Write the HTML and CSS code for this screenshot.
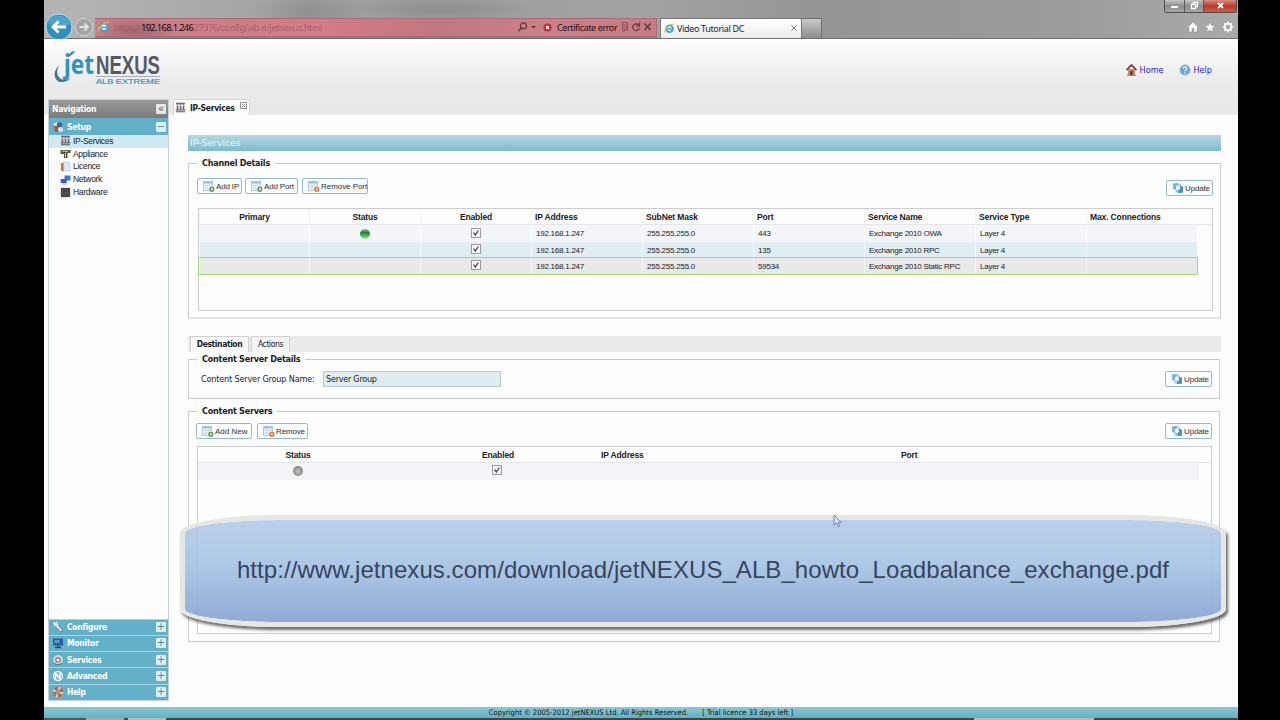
FILE: index.html
```html
<!DOCTYPE html>
<html lang="en">
<head>
  <meta charset="UTF-8" />
  <title>Video Tutorial DC</title>
  <link rel="stylesheet" href="styles.css">
</head>
<body>
  <!-- shared icons -->
  <svg class="defs" width="0" height="0">
    <symbol id="ie" viewBox="0 0 12 12">
      <circle cx="6" cy="6.3" r="3.7" fill="#d9f0fb" stroke="#3d9fd6" stroke-width="2"/>
      <path d="M3 6.5h6.5" stroke="#3d9fd6" stroke-width="1.4"/>
      <path d="M1 10.5C-.5 7 7 .2 11 1.6" fill="none" stroke="#e3bd3c" stroke-width="1.2"/>
    </symbol>
    <symbol id="servers" viewBox="0 0 11 11">
      <path d="M1 1.2h9M1 9.7h9M.5 8h10" stroke="#555" stroke-width="1.1"/>
      <path d="M2.5 1v7M5.5 1v7M8.5 1v7" stroke="#666" stroke-width="1.6"/>
      <path d="M2.5 3v1M5.5 3v1M8.5 3v1" stroke="#ddd" stroke-width="1"/>
    </symbol>
    <symbol id="grid-add" viewBox="0 0 12 12">
      <rect x=".5" y="1.500" width="9" height="9" fill="#edf4fa" stroke="#b4c8da"/>
      <path d="M1 2.500h8.500" stroke="#9cc2e4" stroke-width="2"/>
      <path d="M1 5.500h9M1 8h9M4 3v8M7 3v8" stroke="#c4d3e1" stroke-width=".7"/>
      <circle cx="8.800" cy="9.300" r="1.900" fill="#dff0d8" stroke="#4b9a3e" stroke-width="1.400"/>
    </symbol>
    <symbol id="grid-del" viewBox="0 0 12 12">
      <rect x=".5" y="1.500" width="9" height="9" fill="#edf4fa" stroke="#b4c8da"/>
      <path d="M1 2.500h8.500" stroke="#9cc2e4" stroke-width="2"/>
      <path d="M1 5.500h9M1 8h9M4 3v8M7 3v8" stroke="#c4d3e1" stroke-width=".7"/>
      <circle cx="8.800" cy="9.300" r="1.900" fill="#f6d3bd" stroke="#e2702e" stroke-width="1.400"/>
    </symbol>
    <symbol id="refresh" viewBox="0 0 12 12">
      <path d="M1 1.500 6 .8v2.400L4 4.500v3.700L1 7z" fill="#79b4df"/>
      <path d="M11 10.800 5.700 11V8.300L8 7.200V3.500l3 1.300z" fill="#4a8fca"/>
      <path d="M5 2 9 1.600 7.500 5zM7 10 3 10.400 4.800 6.800z" fill="#9bcbea"/>
    </symbol>
    <symbol id="check" viewBox="0 0 10 10">
      <rect x=".5" y=".5" width="9" height="9" fill="#f4f4f4" stroke="#9b9d9f"/>
      <path d="M2.600 4.600 4.300 7 7.400 2.500" fill="none" stroke="#444b55" stroke-width="1.300"/>
    </symbol>
  </svg>

  <div class="window">
    <div class="chrome">
      <svg class="nav-buttons" width="51" height="28" viewBox="0 0 51 28">
        <circle cx="15" cy="14" r="13" fill="#2f8fbe" stroke="#b9dcea"/>
        <path d="M3.500 11a12 12 0 0 1 23 0q-11 5-23 0" fill="#66b3d4" opacity=".6"/>
        <path d="M22 14H9.500M14.500 8.500 9 14l5.500 5.500" fill="none" stroke="#fff" stroke-width="2.800"/>
        <circle cx="40" cy="14" r="8.700" fill="#a3a3a3" stroke="#c8c8c8" stroke-width="1.200"/>
        <path d="M35.500 14h8M40.500 10.500 44 14l-3.500 3.500" fill="none" stroke="#e2e2e2" stroke-width="1.800"/>
      </svg>
      <div class="address">
        <svg width="12" height="12"><use href="#ie"/></svg>
        <span class="scheme">https://</span><span class="host">192.168.1.246</span><span class="path">:27376/config/alb-e/jetnexus.html</span>
        <svg class="search" width="20" height="12" viewBox="0 0 20 12">
          <circle cx="6.500" cy="4.800" r="3" fill="none" stroke="#5a3a40" stroke-width="1.200"/>
          <path d="M4.300 7 1.500 10" stroke="#5a3a40" stroke-width="1.600"/>
          <path d="M14 5h5l-2.500 2.500z" fill="#5a3a40"/>
        </svg>
        <svg class="cert-icon" width="9" height="9" viewBox="0 0 9 9">
          <circle cx="4.500" cy="4.500" r="4" fill="#d3202c"/>
          <path d="M3 3l3 3M6 3 3 6" stroke="#fff" stroke-width="1.200"/>
        </svg>
        <span class="cert">Certificate error</span>
        <svg class="addr-tools" width="31" height="10" viewBox="0 0 31 10">
          <path d="M1.500.5h5v8h-5zM2 3h4M2 5h4M2 7h4" fill="none" stroke="#8d565e"/>
          <path d="M17.500 3A3.300 3.300 0 1 0 18.300 6M18.500.5V4H15" fill="none" stroke="#543a3e" stroke-width="1.200"/>
          <path d="M23.500 1.500l6 6.500M29.500 1.500l-6 6.500" stroke="#543a3e" stroke-width="1.400"/>
        </svg>
      </div>
      <div class="tab">
        <svg width="11" height="11"><use href="#ie"/></svg>
        <span>Video Tutorial DC</span>
        <svg class="tab-close" width="6" height="6" viewBox="0 0 6 6"><path d="M.5.5l5 5M5.500.5l-5 5" stroke="#777"/></svg>
      </div>
      <div class="new-tab"></div>
      <div class="window-side">
        <div class="window-buttons">
          <div class="wb"><svg width="19" height="12" viewBox="0 0 19 12"><path d="M6 7h7" stroke="#fff" stroke-width="2"/></svg></div>
          <div class="wb"><svg width="18" height="12" viewBox="0 0 18 12"><path d="M6.500 4.500h4v4h-4zM8.500 4V2.500h4v4H11" fill="none" stroke="#fff" stroke-width="1.300"/></svg></div>
          <div class="wb wb-close"><svg width="32" height="12" viewBox="0 0 32 12"><path d="M14 3l5 5M19 3l-5 5" stroke="#fff" stroke-width="1.800"/></svg></div>
        </div>
        <svg class="tools" width="48" height="12" viewBox="0 0 48 12" fill="#fff" stroke="#777" stroke-width=".4">
          <path d="M6 1 11 6 10 7 10 11H7V7.500H5V11H2V7L1 6z"/>
          <path d="M23 .8l1.500 3.600 3.900.3-3 2.500.9 3.900L23 9l-3.300 2.100.9-3.900-3-2.500 3.900-.3z"/>
          <circle cx="41" cy="6" r="3.300" fill="none" stroke="#fff" stroke-width="1.800"/>
          <path d="M41 .8v1.500M41 9.700v1.500M35.800 6h1.500M44.700 6h1.500M37.300 2.300l1 1M43.700 8.700l1 1M44.700 2.300l-1 1M38.300 8.700l-1 1" stroke="#fff" stroke-width="1.600"/>
        </svg>
      </div>
    </div>

    <div class="page">
      <div class="header">
        <svg class="logo" width="112" height="38" viewBox="0 0 112 38">
          <path d="M5.500 16C-.5 21-1 29 4.500 32.500c4 1.500 9 0 12-3-4 1.500-8 2-10.500-.3C2 26 2.500 20 5.500 16z" fill="#3b7791"/>
          <path d="M13 9l6-4 2-3-3 .5-3 3z" fill="#2389b5"/>
          <text class="logo-jet" x="10" y="25" textLength="30" lengthAdjust="spacingAndGlyphs">jet</text>
          <text class="logo-nexus" x="42" y="25" textLength="64" lengthAdjust="spacingAndGlyphs">NEXUS</text>
          <path d="M42 27.500h64" stroke="#8a96a3" stroke-width=".7"/>
          <text class="logo-alb" x="42" y="34.500" textLength="64" lengthAdjust="spacingAndGlyphs">ALB EXTREME</text>
        </svg>
        <div class="links">
          <a href="#">
            <svg width="11" height="12" viewBox="0 0 11 12"><path d="M2 5h7v6H2z" fill="#c98a66"/><path d="M.5 6 5.500 1l5 5" fill="none" stroke="#8e3f2c" stroke-width="1.800"/><path d="M4.300 7h2.400v4H4.300z" fill="#5e2c22"/><path d="M1 11.300h9" stroke="#777"/></svg>
            <span>Home</span>
          </a>
          <a href="#">
            <svg width="12" height="12" viewBox="0 0 12 12"><circle cx="6" cy="6" r="5.200" fill="#6ba5cf" stroke="#a8c3d6"/><path d="M4.300 4.600c0-2.300 3.600-2.100 3.500 0C7.700 6 6 5.800 6 7.300M6 8.500v1.200" fill="none" stroke="#fff" stroke-width="1.200"/></svg>
            <span>Help</span>
          </a>
        </div>
      </div>

      <div class="body">
        <div class="sidebar">
          <div class="nav-title"><span>Navigation</span><span class="toggle">«</span></div>
          <div class="nav-group">
            <svg width="12" height="12" viewBox="0 0 12 12"><path d="M1 3l4-2 2 3-3 2z" fill="#e7dfc4"/><circle cx="7.500" cy="4" r="2.700" fill="#3567a8"/><path d="M2 5h4l1 6H3z" fill="#b5523a"/><circle cx="8.500" cy="8.500" r="2.500" fill="#d8e1ea"/></svg>
            <span>Setup</span><span class="toggle">−</span>
          </div>
          <ul class="nav-items">
            <li class="active"><svg width="11" height="11"><use href="#servers"/></svg>IP-Services</li>
            <li><svg width="11" height="11" viewBox="0 0 11 11"><path d="M.5 2h10v3H7.500v5H4V6H.5z" fill="#5a5a38"/><path d="M2 3.300h6M5.500 5v4" stroke="#d8d25a"/></svg>Appliance</li>
            <li><svg width="11" height="11" viewBox="0 0 11 11"><path d="M3 1h6l1 1v8H3z" fill="#dbe8f4" stroke="#b2c5d8" stroke-width=".6"/><path d="M1 2h2.500v8H1z" fill="#e0683c"/></svg>Licence</li>
            <li><svg width="11" height="11" viewBox="0 0 11 11"><path d="M4.500 1.500h6v5h-6z" fill="#3f78c6"/><path d="M.8 5h6v4h-6z" fill="#2f62b2"/><path d="M1.500 10h5" stroke="#9ab"/></svg>Network</li>
            <li><svg width="11" height="11" viewBox="0 0 11 11"><path d="M1 1h9v9H1z" fill="#3d3d3d"/><path d="M.5 3h10M.5 5.500h10M.5 8h10M3 .5v10M5.500.5v10M8 .5v10" stroke="#555" stroke-width=".8"/></svg>Hardware</li>
          </ul>
          <div class="nav-bottom">
            <div class="nav-group"><svg width="12" height="12" viewBox="0 0 12 12"><path d="M3.500 3.500 10 10.500" stroke="#555f66" stroke-width="3"/><path d="M1.500 1.500 4 4l5.500 6" stroke="#eee" stroke-width="2"/><path d="M4.500.8 5.500 4 2 5" fill="none" stroke="#eee" stroke-width="1.200"/></svg><span>Configure</span><span class="toggle">+</span></div>
            <div class="nav-group"><svg width="12" height="12" viewBox="0 0 12 12"><path d="M1 1.500h10v7H1z" fill="#2b5f9e"/><path d="M2.500 3h5v3h-5z" fill="#5c9ad0"/><path d="M3 10.500h6M6 8v2" stroke="#345" stroke-width="1.300"/></svg><span>Monitor</span><span class="toggle">+</span></div>
            <div class="nav-group"><svg width="12" height="12" viewBox="0 0 12 12"><circle cx="6" cy="6" r="3.800" fill="#777" stroke="#d4d4d4" stroke-width="2.200"/><circle cx="6" cy="6" r="1.600" fill="#eee"/><path d="M2 9.500q4 2.500 8 0" fill="none" stroke="#666"/></svg><span>Services</span><span class="toggle">+</span></div>
            <div class="nav-group"><svg width="12" height="12" viewBox="0 0 12 12"><circle cx="6" cy="6" r="4.500" fill="#8dabc4" stroke="#e4edf2" stroke-width="1.300"/><path d="M3.500 9V3.500L8 8.500V3" fill="none" stroke="#fff" stroke-width="1.500"/></svg><span>Advanced</span><span class="toggle">+</span></div>
            <div class="nav-group"><svg width="12" height="12" viewBox="0 0 12 12"><circle cx="6" cy="6" r="3.700" fill="none" stroke="#d0602e" stroke-width="3"/><circle cx="6" cy="6" r="3.700" fill="none" stroke="#e8dccb" stroke-width="3" stroke-dasharray="1.800 4.012"/></svg><span>Help</span><span class="toggle">+</span></div>
          </div>
        </div>

        <div class="main">
          <div class="page-tabs">
            <div class="page-tab">
              <svg width="11" height="11"><use href="#servers"/></svg>
              <span>IP-Services</span>
              <svg class="page-tab-close" width="7" height="7" viewBox="0 0 7 7"><path d="M.5.5h6v6h-6zM2 2l3 3M5 2 2 5" fill="none" stroke="#888" stroke-width=".9"/></svg>
            </div>
          </div>

          <div class="content">
            <div class="panel-title">IP-Services</div>

            <fieldset class="channels">
              <legend>Channel Details</legend>
              <div class="toolbar">
                <button class="btn add-ip"><svg width="12" height="12"><use href="#grid-add"/></svg>Add IP</button>
                <button class="btn add-port"><svg width="12" height="12"><use href="#grid-add"/></svg>Add Port</button>
                <button class="btn remove-port"><svg width="12" height="12"><use href="#grid-del"/></svg>Remove Port</button>
                <button class="btn update"><svg width="12" height="12"><use href="#refresh"/></svg>Update</button>
              </div>
              <div class="grid channel-grid">
                <div class="row head">
                  <div class="mid">Primary</div><div class="mid">Status</div><div class="mid">Enabled</div>
                  <div>IP Address</div><div>SubNet Mask</div><div>Port</div><div>Service Name</div><div>Service Type</div><div>Max. Connections</div>
                </div>
                <div class="row first">
                  <div></div><div class="mid"><span class="led green"></span></div><div class="mid box"><svg width="10" height="10"><use href="#check"/></svg></div>
                  <div>192.168.1.247</div><div>255.255.255.0</div><div>443</div><div>Exchange 2010 OWA</div><div>Layer 4</div><div></div>
                </div>
                <div class="row alt">
                  <div></div><div></div><div class="mid box"><svg width="10" height="10"><use href="#check"/></svg></div>
                  <div>192.168.1.247</div><div>255.255.255.0</div><div>135</div><div>Exchange 2010 RPC</div><div>Layer 4</div><div></div>
                </div>
                <div class="row selected">
                  <div></div><div></div><div class="mid box"><svg width="10" height="10"><use href="#check"/></svg></div>
                  <div>192.168.1.247</div><div>255.255.255.0</div><div>59534</div><div>Exchange 2010 Static RPC</div><div>Layer 4</div><div></div>
                </div>
              </div>
            </fieldset>

            <div class="sub-tabs">
              <div class="sub-tab current">Destination</div>
              <div class="sub-tab">Actions</div>
            </div>

            <fieldset class="group">
              <legend>Content Server Details</legend>
              <div class="field-row">
                <label>Content Server Group Name:</label>
                <div class="field">Server Group</div>
                <button class="btn update"><svg width="12" height="12"><use href="#refresh"/></svg>Update</button>
              </div>
            </fieldset>

            <fieldset class="servers">
              <legend>Content Servers</legend>
              <div class="toolbar">
                <button class="btn add-new"><svg width="12" height="12"><use href="#grid-add"/></svg>Add New</button>
                <button class="btn remove"><svg width="12" height="12"><use href="#grid-del"/></svg>Remove</button>
                <button class="btn update"><svg width="12" height="12"><use href="#refresh"/></svg>Update</button>
              </div>
              <div class="grid server-grid">
                <div class="row head"><div class="mid">Status</div><div class="mid">Enabled</div><div>IP Address</div><div>Port</div></div>
                <div class="row first"><div class="mid"><span class="led grey"></span></div><div class="mid box"><svg width="10" height="10"><use href="#check"/></svg></div><div></div><div></div></div>
              </div>
            </fieldset>
          </div>
        </div>
      </div>
    </div>

    <div class="footer"><span>Copyright © 2005-2012 jetNEXUS Ltd. All Rights Reserved.</span><span>[ Trial licence 33 days left ]</span></div>
    <div class="taskbar"></div>

    <div class="callout"><span>http://www.jetnexus.com/download/jetNEXUS_ALB_howto_Loadbalance_exchange.pdf</span></div>
    <svg class="cursor" width="9" height="14" viewBox="0 0 9 14"><path d="M1 1v10l2.300-2 1.700 3.800 1.700-.8L5 8.300h3z" fill="#d5e2f2" stroke="#66809f" stroke-width=".9"/></svg>
  </div>
</body>
</html>
```
FILE: styles.css
```css
* {
  box-sizing: border-box;
}

body {
  margin: 0;
  height: 720px;
  overflow: hidden;
  background: #000;
  font-family: "Liberation Sans", Arial, sans-serif;
  font-size: 8px;
  color: #222;
}

svg {
  display: block;
  flex: none;
}

.defs {
  position: absolute;
}

.window {
  position: relative;
  width: 1194px;
  height: 720px;
  margin-left: 44px;
  display: flex;
  flex-direction: column;
  background: #fdfdfe;
}

/* browser frame */
.chrome {
  flex: none;
  height: 39px;
  display: flex;
  align-items: flex-end;
  border-bottom: 1px solid #707070;
  background:
    radial-gradient(ellipse 60px 25px at 265px 12px, rgba(110, 110, 110, 0.35), transparent),
    radial-gradient(ellipse 90px 14px at 400px 10px, rgba(120, 120, 120, 0.4), transparent),
    linear-gradient(90deg, #b5b5b5 0, #a8a8a8 15%, #9d9d9d 30%, #a2a2a2 50%, #959595 65%, #9b9b9b 85%, #aaa 100%);
  font-family: "Noto Sans", "Open Sans", sans-serif;
}

.nav-buttons {
  height: 28px;
  margin-bottom: -3px;
}

.address {
  width: 562px;
  height: 20px;
  padding: 0 4px 1px 3px;
  display: flex;
  align-items: center;
  border: 1px solid #a96c74;
  border-width: 1px 1px 2px 0;
  background:
    radial-gradient(ellipse 40px 14px at 40px 12px, rgba(120, 80, 90, 0.55), transparent),
    linear-gradient(90deg, #c97f88, #d57c88 40%, #c37681 60%, #cc808a 80%, #c87b85);
  font-size: 9px;
  color: #a4636d;
  white-space: nowrap;
}

.scheme {
  width: 27px;
  margin-left: 4px;
  letter-spacing: -0.6px;
}

.scheme, .path {
  filter: blur(0.5px);
}

.path {
  letter-spacing: -0.4px;
}

.host {
  width: 50px;
  margin-right: 1px;
  letter-spacing: -0.75px;
  font-size: 9.5px;
  color: #15090b;
}

.search {
  margin-left: auto;
}

.cert-icon {
  margin-left: 6px;
}

.cert {
  width: 60px;
  margin: 0 4px 0 5px;
  font-size: 9px;
  letter-spacing: -0.4px;
  color: #241013;
}

.tab {
  width: 142px;
  height: 20px;
  margin-left: 3px;
  padding: 0 4px 1px 3px;
  display: flex;
  align-items: center;
  gap: 2px;
  border: 1px solid #777;
  border-bottom: 0;
  background: linear-gradient(#fff, #ededed);
  font-size: 9px;
  letter-spacing: -0.35px;
}

.tab-close {
  margin-left: auto;
}

.new-tab {
  width: 20px;
  height: 20px;
  border: 1px solid #6d6d6d;
  border-width: 1px 1px 0 0;
  background: linear-gradient(#c9c9c9, #8d8d8d);
}

.window-side {
  height: 38px;
  margin-left: auto;
  display: flex;
  flex-direction: column;
  align-items: flex-end;
}

.window-buttons {
  display: flex;
  height: 13px;
  margin-right: 1px;
  border: 1px solid #4f4f4f;
  border-top: 0;
  border-radius: 0 0 3px 3px;
  overflow: hidden;
}

.wb {
  border-right: 1px solid #5b5b5b;
  background: linear-gradient(#c5c5c5, #8c8c8c 50%, #a7a7a7);
}

.wb-close {
  border-right: 0;
  background: linear-gradient(#d98f83, #b93a29 50%, #cf5b44);
}

.tools {
  margin: 8px 3px 0 0;
}

/* page */
.page {
  flex: 1;
  min-height: 0;
  display: flex;
  flex-direction: column;
  background: linear-gradient(#fdfdfd, #ebebeb 45px, #e9e9e9 76px, #fdfdfe 76px);
}

.header {
  height: 60px;
  display: flex;
  justify-content: space-between;
}

.logo {
  margin: 10px 0 0 10px;
  overflow: visible;
}

.logo-jet {
  font: bold 27px "Noto Sans", "Open Sans", sans-serif;
  fill: #2c94be;
}

.logo-nexus {
  font: bold 26px "Liberation Sans", sans-serif;
  fill: #555a68;
}

.logo-alb {
  font: 7.5px "Liberation Sans", sans-serif;
  fill: #3b93b4;
  stroke: #3b93b4;
  stroke-width: 0.2px;
}

.links {
  display: flex;
  gap: 15px;
  padding: 24px 26px 0 0;
}

.links a {
  display: flex;
  align-items: center;
  gap: 3px;
  height: 13px;
  font: 9px "DejaVu Sans Condensed", "DejaVu Sans", sans-serif;
  color: #2a22c0;
  text-decoration: none;
}

.body {
  flex: 1;
  display: flex;
  padding-left: 4px;
}

.sidebar {
  width: 121px;
  height: 602px;
  display: flex;
  flex-direction: column;
  border: 1px solid #c3d3da;
  background: #fdfdfe;
}

.nav-title, .nav-group {
  display: flex;
  align-items: center;
  font: bold 8.5px "DejaVu Sans Condensed", "DejaVu Sans", sans-serif;
  letter-spacing: -0.25px;
  color: #fff;
}

.nav-title {
  height: 18px;
  padding: 0 2px 0 3px;
  background: linear-gradient(#9a9a9a, #7b7b7b);
}

.nav-group {
  height: 17px;
  padding: 0 2px 0 3px;
  gap: 3px;
  background: #62b1c8;
}

.toggle {
  width: 10px;
  height: 10px;
  margin-left: auto;
  border-radius: 1px;
  background: #d9eef5;
  font: 10px/9px "DejaVu Sans", sans-serif;
  letter-spacing: 0;
  text-align: center;
  color: #4a8ba1;
}

.nav-title .toggle {
  background: #e6e6e6;
  color: #555;
}

.nav-items {
  margin: 0;
  padding: 0;
  list-style: none;
}

.nav-items li {
  height: 12.8px;
  padding-left: 11px;
  padding-bottom: 1px;
  display: flex;
  align-items: center;
  gap: 2px;
  font-size: 8.5px;
  letter-spacing: -0.3px;
}

.nav-items .active {
  background: #cfe9f2;
}

.nav-bottom {
  margin-top: auto;
}

.nav-bottom .nav-group {
  height: 16.3px;
  border-top: 1px solid #a5d5e2;
}

.main {
  flex: 1;
}

.page-tabs {
  height: 16px;
  padding-left: 4px;
}

.page-tab {
  width: 77px;
  height: 16px;
  padding: 0 2px 0 1px;
  display: flex;
  align-items: center;
  gap: 4px;
  border: 1px solid #d5d5d5;
  border-bottom: 0;
  border-radius: 2px 2px 0 0;
  background: #fdfdfe;
  font: bold 8.5px "DejaVu Sans Condensed", "DejaVu Sans", sans-serif;
  letter-spacing: -0.3px;
  color: #222;
  white-space: nowrap;
}

.page-tab-close {
  margin: -4px 0 0 auto;
}

.content {
  padding: 20px 17px 0 19px;
}

.panel-title {
  height: 16px;
  padding-left: 2px;
  background: linear-gradient(#b4d9e3, #7fb9d0);
  font: 9.5px/16px "DejaVu Sans", sans-serif;
  letter-spacing: -0.1px;
  color: #e9f7fb;
}

fieldset {
  margin: 0;
  padding: 0;
  min-width: 0;
  border: 1px solid #c6c8ca;
}

legend {
  height: 12px;
  margin-left: 8px;
  padding: 0 5px;
  font: bold 9px/12px "DejaVu Sans Condensed", "DejaVu Sans", sans-serif;
  letter-spacing: -0.25px;
  color: #1c1c1c;
}

.channels {
  height: 162px;
  margin-top: 6px;
  border-bottom: 2px solid #e4e4e4;
}

.toolbar {
  display: flex;
  align-items: flex-start;
}

.btn {
  height: 16px;
  margin: 0;
  padding: 0 0 0 5px;
  display: flex;
  align-items: center;
  gap: 1px;
  border: 1px solid #93bccb;
  border-radius: 2px;
  background: #fbfcfd;
  font: 8px "Liberation Sans", Arial, sans-serif;
  letter-spacing: -0.15px;
  color: #333;
  white-space: nowrap;
}

.channels .toolbar {
  height: 39px;
  padding: 9px 7px 0 8px;
}

.channels .update {
  margin-top: 2px;
}

.add-ip { width: 45px; margin-right: 3px; }
.add-port { width: 53px; margin-right: 4px; }
.remove-port { width: 66px; letter-spacing: -0.05px; }
.add-new { width: 56px; margin-right: 5px; letter-spacing: 0; }
.remove { width: 51px; }
.update { width: 47px; margin-left: auto; }

.grid {
  border: 1px solid #cbcdcf;
  background: #fdfdfe;
}

.channel-grid {
  height: 103px;
  margin: 0 7px 0 9px;
}

.row {
  display: grid;
  align-items: center;
  letter-spacing: -0.24px;
}

.channel-grid .row {
  width: 998px;
  grid-template-columns: 110px repeat(8, 111px);
}

.row > div {
  height: 100%;
  display: flex;
  align-items: center;
  padding-left: 4px;
  border-left: 1px solid rgba(255, 255, 255, 0.6);
}

.row .mid {
  justify-content: center;
  padding-left: 0;
}

.row .box {
  padding: 0 1px 2px 0;
}

.row.head {
  height: 16px;
  border-bottom: 1px solid #e4e6e8;
  font-weight: bold;
  font-size: 8.5px;
  letter-spacing: -0.13px;
}

.channel-grid .head {
  width: auto;
}

.head > div {
  border-left-color: #f3f3f3;
}

.head > div:not(.mid) {
  padding-left: 3px;
}

.first {
  height: 17px;
  background: #f3f5f8;
}

.alt {
  height: 16px;
  background: #e0edf2;
}

.selected {
  height: 16px;
  outline: 1px solid #a6da6c;
  background: #e8e8e8;
}

.led {
  width: 10px;
  height: 10px;
  border-radius: 50%;
}

.green {
  background: linear-gradient(#8fc79a, #277a39 35%, #44b84c 65%, #a4eb92);
}

.grey {
  margin-bottom: 2px;
  background: radial-gradient(circle at 50% 55%, #c9c9c9, #8d8d8d 60%, #777);
}

.sub-tabs {
  height: 16px;
  margin-top: 17px;
  display: flex;
  gap: 2px;
  padding-left: 2px;
  background: #eaeaea;
}

.sub-tab {
  width: 39px;
  border: 1px solid #d0d0d0;
  border-bottom: 0;
  background: #f5f5f5;
  font: 8.5px/15px "DejaVu Sans Condensed", "DejaVu Sans", sans-serif;
  letter-spacing: -0.4px;
  text-align: center;
}

.current {
  width: 59px;
  background: #fdfdfe;
  font-weight: bold;
}

.group {
  height: 46px;
  margin: 1px 1px 0 0;
}

.field-row {
  display: flex;
  align-items: center;
  padding: 6px 7px 0 12px;
}

.field-row label {
  width: 122px;
  font: 9px "DejaVu Sans Condensed", "DejaVu Sans", sans-serif;
  letter-spacing: -0.16px;
  white-space: nowrap;
}

.field {
  width: 178px;
  height: 16px;
  padding-left: 2px;
  border: 1px solid #b3c9cd;
  background: #e0edee;
  font: 9px/15px "DejaVu Sans Condensed", "DejaVu Sans", sans-serif;
  letter-spacing: -0.25px;
}

.servers {
  height: 237px;
  margin: 6px 1px 0 0;
}

.servers .toolbar {
  height: 29px;
  padding: 6px 7px 0 7px;
}

.server-grid {
  height: 188px;
  margin: 0 7px 0 8px;
}

.server-grid .row {
  grid-template-columns: 200px 200px 300px 300px;
}

.server-grid .row > div {
  border-left: 0;
}

.server-grid .first {
  width: 1001px;
}

.server-grid .box {
  padding: 0 2px 3px 0;
}

.footer {
  flex: none;
  height: 11px;
  display: flex;
  justify-content: center;
  gap: 14px;
  background: linear-gradient(#8cc8d4, #62b1c4);
  font: 7.5px/11px "DejaVu Sans Condensed", "DejaVu Sans", sans-serif;
  color: #111;
}

.taskbar {
  flex: none;
  height: 2px;
  background: linear-gradient(90deg, #555 0 42px, #aaa 42px 80px, #444 80px 84px, #bbb 84px 122px, #444 122px 930px, #bbb 930px 1050px, #444 1050px);
}

/* caption laid over the page */
.callout {
  position: absolute;
  left: 136px;
  top: 515px;
  width: 1046px;
  height: 112px;
  padding-bottom: 2px;
  display: flex;
  align-items: center;
  justify-content: center;
  border: 5px solid rgba(228, 229, 227, 0.94);
  border-radius: 100px / 18px;
  background: linear-gradient(rgba(178, 203, 233, 0.9), rgba(164, 194, 227, 0.9) 45%, rgba(136, 164, 210, 0.93)) padding-box;
  box-shadow: 2px 3px 3px rgba(60, 60, 55, 0.75);
  font-size: 24px;
  letter-spacing: 0.065px;
  color: #364560;
  white-space: nowrap;
}

.cursor {
  position: absolute;
  left: 789px;
  top: 514px;
}
```
